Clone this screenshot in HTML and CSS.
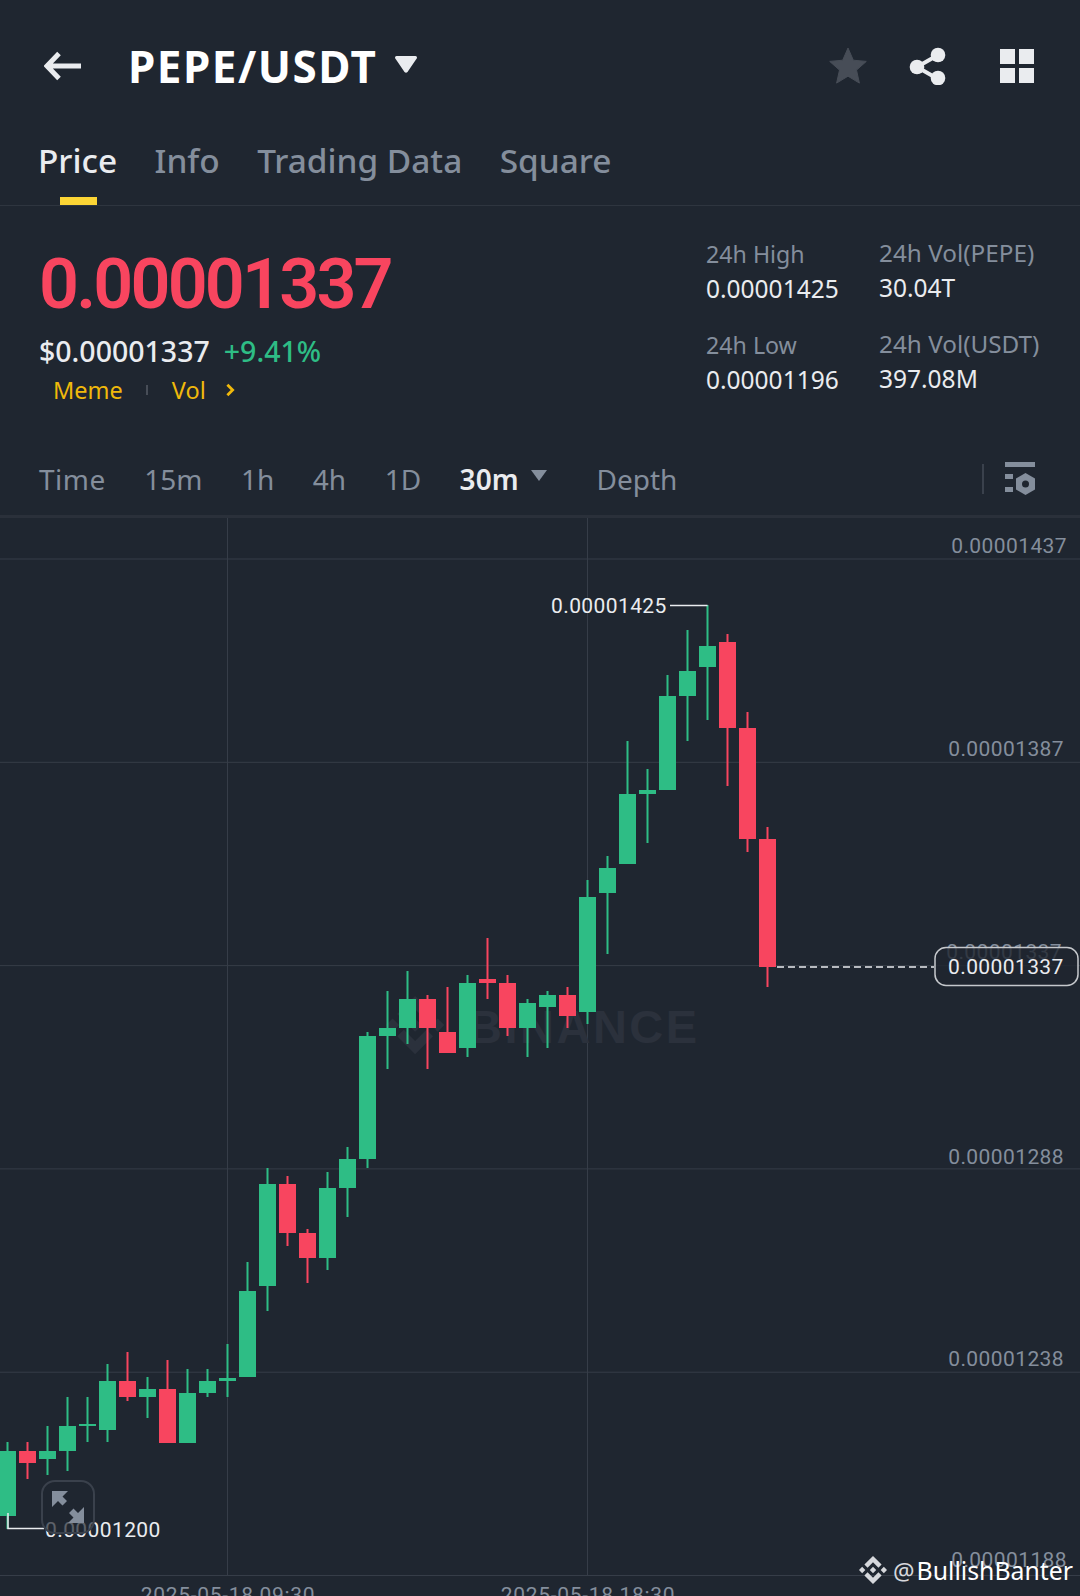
FILE: index.html
```html
<!DOCTYPE html>
<html lang="en">
<head>
  <meta charset="UTF-8">
  <meta name="viewport" content="width=device-width, initial-scale=1">
  <title>PEPE/USDT</title>
  <link rel="stylesheet" href="styles.css">
</head>
<body>

  <header class="topbar">
    <svg class="back" viewBox="0 0 38 30" width="38" height="30">
      <path d="M15 2.500 3 15l12 12.500M3 15h34" fill="none" stroke="#eaecef" stroke-width="5"/>
    </svg>
    <h1 class="pair">PEPE/USDT</h1>
    <svg class="pair-caret" viewBox="0 0 24 17" width="24" height="17">
      <path d="M1 1.500Q1 0 2.500 0h19Q23 0 23 1.500Q23 2.500 22 3.500L13.500 16Q12 17.500 10.500 16L2 3.500Q1 2.500 1 1.500z" fill="#eaecef"/>
    </svg>
    <div class="actions">
      <svg viewBox="0 0 38 38" width="38" height="38">
        <path d="M19 1l5.300 12.200 13 1.200-9.800 8.700 2.900 13L19 29.200 7.600 36.100l2.900-13L.7 14.400l13-1.200z" fill="#474d57" stroke="#474d57" stroke-linejoin="round"/>
      </svg>
      <svg viewBox="0 0 38 38" width="38" height="38">
        <path d="M29 8 8 20l21 12" fill="none" stroke="#eaecef" stroke-width="4"/>
        <circle cx="29" cy="8" r="7.300" fill="#eaecef"/>
        <circle cx="8" cy="20" r="7.300" fill="#eaecef"/>
        <circle cx="29" cy="31" r="7.300" fill="#eaecef"/>
      </svg>
      <div class="grid-icon"><i></i><i></i><i></i><i></i></div>
    </div>
  </header>

  <nav class="tabs">
    <a class="tab active">Price</a>
    <a class="tab">Info</a>
    <a class="tab">Trading Data</a>
    <a class="tab">Square</a>
  </nav>

  <section class="summary">
    <div class="last">
      <div class="last-price">0.00001337</div>
      <div class="last-sub"><span class="usd">$0.00001337</span><span class="change">+9.41%</span></div>
      <div class="tags">
        <span>Meme</span>
        <i class="tag-sep"></i>
        <span>Vol</span>
        <svg viewBox="0 0 10 16" width="10" height="14"><path d="M2 2l6 6-6 6" fill="none" stroke="#f0b90b" stroke-width="3.200"/></svg>
      </div>
    </div>
    <div class="stats stats-price">
      <div class="stat"><span class="stat-label">24h High</span><span class="stat-value">0.00001425</span></div>
      <div class="stat"><span class="stat-label">24h Low</span><span class="stat-value">0.00001196</span></div>
    </div>
    <div class="stats stats-vol">
      <div class="stat"><span class="stat-label">24h Vol(PEPE)</span><span class="stat-value">30.04T</span></div>
      <div class="stat"><span class="stat-label">24h Vol(USDT)</span><span class="stat-value">397.08M</span></div>
    </div>
  </section>

  <div class="intervals">
    <a class="interval time">Time</a>
    <a class="interval">15m</a>
    <a class="interval">1h</a>
    <a class="interval">4h</a>
    <a class="interval">1D</a>
    <a class="interval current">30m</a>
    <svg class="interval-caret" viewBox="0 0 16 11" width="16" height="11"><path d="M0 0h16L8 11z" fill="#848e9c"/></svg>
    <a class="interval depth">Depth</a>
    <i class="interval-sep"></i>
    <svg class="chart-settings" viewBox="0 0 31 34" width="31" height="34">
      <path d="M0 0h30v5H0zM0 12h8v5H0zM0 25h8v5H0z" fill="#848e9c"/>
      <path d="M20.500 11l9.500 5.500v11l-9.500 5.500-9.500-5.500v-11z" fill="#848e9c"/>
      <circle cx="20.500" cy="22" r="3.500" fill="#1f2630"/>
    </svg>
  </div>

  <div class="chart">
    <svg id="chart-svg" viewBox="0 518 1080 1078" width="1080" height="1078">
      <g id="grid" class="grid"></g>
      <g class="watermark">
        <path transform="translate(386 996) scale(.46)" d="M38.730 53.200l24.590-24.580 24.600 24.600 14.300-14.310L63.320 0 24.430 38.890zM0 63.310l14.300-14.310 14.310 14.310-14.310 14.300zM38.730 73.410l24.590 24.590 24.600-24.600 14.310 14.290-38.900 38.910-38.910-38.880zM98.010 63.310l14.300-14.310 14.310 14.300-14.310 14.320zM77.830 63.300L63.320 48.780 52.590 59.510l-1.240 1.230-2.540 2.540 14.510 14.500 14.510-14.470z"/>
        <text x="468" y="1043">BINANCE</text>
      </g>
      <g id="axis" class="axis"></g>
      <g id="candles"></g>

      <text class="mark" x="551" y="613">0.00001425</text>
      <path class="mark-line" d="M670 605.500h37.500"/>
      <path class="mark-line" d="M8 1513v15.500h36"/>
      <text class="mark" x="45" y="1537">0.00001200</text>

      <path class="last-line" d="M777 967h157"/>
      <rect class="last-box" x="935" y="947.500" width="143" height="38" rx="11"/>
      <text class="mark" x="948" y="974">0.00001337</text>

      <text class="axis-time" x="228" y="1602" text-anchor="middle">2025-05-18 09:30</text>
      <text class="axis-time" x="588" y="1602" text-anchor="middle">2025-05-18 18:30</text>
    </svg>

    <button class="expand">
      <svg viewBox="0 0 32 32" width="32" height="32">
        <path d="M0 0h16l-5.500 5.500 4.500 4.500-4.500 4.500-4.500-4.500L0 16zM32 32H16l5.500-5.500-4.500-4.500 4.500-4.500 4.500 4.500L32 16z" fill="#848e9c"/>
      </svg>
    </button>

    <div class="credit">
      <svg viewBox="0 0 126.610 126.610" width="28" height="28">
        <path d="M38.730 53.200l24.590-24.580 24.600 24.600 14.300-14.310L63.320 0 24.430 38.890zM0 63.310l14.300-14.310 14.310 14.310-14.310 14.300zM38.730 73.410l24.590 24.590 24.600-24.600 14.310 14.290-38.900 38.910-38.910-38.880zM98.010 63.310l14.300-14.310 14.310 14.300-14.310 14.320zM77.830 63.300L63.320 48.780 52.590 59.510l-1.240 1.230-2.540 2.540 14.510 14.500 14.510-14.470z" fill="#d6d8dc"/>
      </svg>
      <span class="credit-at">@</span>
      <span class="credit-name">BullishBanter</span>
    </div>
  </div>

  <script>
    // one row per slot from the left: [wickTop, bodyTop, bodyBottom, wickBottom, up?]
    const candles = [
      [1442, 1451, 1516, 1529, 1], [1442, 1451, 1463, 1479, 0], [1426, 1451, 1459, 1475, 1],
      [1397, 1426, 1451, 1471, 1], [1397, 1424, 1426, 1442, 1], [1364, 1381, 1430, 1442, 1],
      [1352, 1381, 1397, 1401, 0], [1377, 1389, 1397, 1418, 1], [1360, 1389, 1443, 1443, 0],
      [1369, 1393, 1443, 1443, 1], [1369, 1381, 1393, 1397, 1], [1344, 1378, 1381, 1397, 1],
      [1262, 1291, 1377, 1377, 1], [1168, 1184, 1286, 1311, 1], [1176, 1184, 1233, 1246, 0],
      [1229, 1233, 1258, 1283, 0], [1172, 1188, 1258, 1270, 1], [1147, 1159, 1188, 1217, 1],
      [1032, 1036, 1159, 1168, 1], [991, 1028, 1036, 1069, 1], [971, 999, 1028, 1044, 1],
      [995, 999, 1028, 1069, 0], [987, 1032, 1053, 1053, 0], [975, 983, 1048, 1057, 1],
      [938, 979, 983, 999, 0], [975, 983, 1028, 1036, 0], [999, 1003, 1028, 1057, 1],
      [991, 995, 1007, 1048, 1], [987, 995, 1016, 1028, 0], [880, 897, 1012, 1024, 1],
      [856, 868, 893, 954, 1], [741, 794, 864, 864, 1], [769, 790, 794, 843, 1],
      [675, 696, 790, 790, 1], [630, 671, 696, 741, 1], [605, 646, 667, 720, 1],
      [634, 642, 728, 786, 0], [712, 728, 839, 852, 0], [827, 839, 967, 987, 0]
    ];
    const axisLabels = [
      ["0.00001437", 1067, 553], ["0.00001387", 1064, 756], ["0.00001337", 1062, 959],
      ["0.00001288", 1064, 1164], ["0.00001238", 1064, 1366], ["0.00001188", 1067, 1567]
    ];
    const NS = "http://www.w3.org/2000/svg";

    function add(parent, tag, attrs, text) {
      const el = document.createElementNS(NS, tag);
      for (const key in attrs) el.setAttribute(key, attrs[key]);
      if (text) el.textContent = text;
      document.getElementById(parent).appendChild(el);
    }

    axisLabels.forEach((label, i) => {
      add("grid", "rect", { x: 0, y: 558.5 + i * 203.3, width: 1080, height: 1 });
      add("axis", "text", { x: label[1], y: label[2], "text-anchor": "end" }, label[0]);
    });
    add("grid", "rect", { x: 227, y: 518, width: 1, height: 1057 });
    add("grid", "rect", { x: 587, y: 518, width: 1, height: 1057 });

    candles.forEach((c, k) => {
      const x = 7.5 + k * 20;
      const color = c[4] ? "#2ebd85" : "#f8455f";
      add("candles", "rect", { x: x - 1, y: c[0], width: 2, height: c[3] - c[0], fill: color });
      add("candles", "rect", { x: x - 8.5, y: c[1], width: 17, height: c[2] - c[1], fill: color });
    });
  </script>

</body>
</html>
```

FILE: styles.css
```css
html, body {
  height: 1596px;
  overflow: hidden;
}

body {
  margin: 0;
  background: #1f2630;
  color: #eaecef;
  font-family: "Noto Sans", "Open Sans", sans-serif;
}

/* top bar */
.topbar {
  display: flex;
  align-items: center;
  height: 132px;
  padding: 0 46px 0 44px;
}

.pair {
  margin: 0 0 0 46px;
  font-size: 44px;
  font-weight: 700;
  letter-spacing: 1.5px;
  color: #fff;
}

.pair-caret {
  margin: -3px 0 0 17px;
}

.actions {
  display: flex;
  align-items: center;
  gap: 42px;
  margin-left: auto;
}

.grid-icon {
  display: grid;
  grid-template-columns: 15px 15px;
  grid-auto-rows: 15px;
  gap: 4px;
  margin-left: 11px;
}

.grid-icon i {
  background: #eaecef;
}

/* tabs */
.tabs {
  display: flex;
  gap: 37.500px;
  height: 73px;
  padding-left: 38px;
  border-bottom: 1px solid #2e353f;
}

.tab {
  position: relative;
  font-size: 33.400px;
  font-weight: 500;
  line-height: 56px;
  color: #848e9c;
}

.tab.active {
  color: #eaecef;
}

.tab.active::after {
  content: "";
  position: absolute;
  left: 50%;
  bottom: 0;
  width: 37px;
  height: 8px;
  margin-left: -18px;
  background: #fcd535;
}

/* price summary */
.summary {
  display: flex;
  height: 239px;
  padding-left: 39px;
}

.last {
  flex: 0 0 667px;
}

.last-price {
  margin-top: 38px;
  font-family: Roboto, sans-serif;
  font-size: 70px;
  font-weight: 600;
  letter-spacing: -2.800px;
  line-height: 80px;
  color: #f8455f;
}

.last-sub {
  display: flex;
  gap: 14px;
  margin-top: 9px;
  font-size: 28.500px;
  font-weight: 500;
  line-height: 36px;
}

.change {
  color: #2ebd85;
}

.tags {
  display: flex;
  align-items: center;
  gap: 23.500px;
  padding-left: 14px;
  margin-top: 4px;
  font-size: 23.500px;
  line-height: 34px;
  color: #f0b90b;
}

.tags svg {
  margin-left: -4px;
}

.tag-sep {
  width: 2px;
  height: 10px;
  background: #474d57;
}

.stats {
  display: flex;
  flex-direction: column;
  gap: 22px;
  padding-top: 31px;
}

.stats-price {
  flex: 0 0 173px;
}

.stats-vol {
  padding-top: 30px;
}

.stat {
  display: flex;
  flex-direction: column;
}

.stat-label {
  font-size: 23.200px;
  line-height: 34px;
  color: #848e9c;
}

.stats-vol .stat-label {
  font-size: 24.300px;
}

.stat-value {
  font-size: 24.500px;
  line-height: 35px;
}

/* interval row */
.intervals {
  display: flex;
  align-items: center;
  box-sizing: border-box;
  height: 73px;
  padding: 0 44px 2px 39px;
  border-bottom: 3px solid #2a303a;
}

.interval {
  margin-right: 38.500px;
  font-size: 28px;
  color: #848e9c;
}

.interval.time {
  letter-spacing: 0.5px;
}

.interval.current {
  margin-right: 12px;
  font-weight: 600;
  color: #eaecef;
}

.interval-caret {
  margin: -8px 50px 0 0;
}

.interval.depth {
  margin-right: auto;
}

.interval-sep {
  width: 2px;
  height: 30px;
  margin-right: 21px;
  background: #3a414c;
}

/* chart */
.chart {
  position: relative;
}

.chart svg {
  display: block;
}

.grid rect {
  fill: #363d48;
}

.watermark {
  fill: #2b313c;
}

.watermark text {
  font-family: "Liberation Sans", sans-serif;
  font-size: 47px;
  font-weight: 700;
  letter-spacing: 2.500px;
}

.axis text,
.axis-time {
  font-family: Roboto, sans-serif;
  font-size: 21px;
  letter-spacing: 0.4px;
  fill: #848e9c;
}

.axis-time {
  letter-spacing: 0.7px;
}

.mark {
  font-family: Roboto, sans-serif;
  font-size: 21px;
  letter-spacing: 0.4px;
  fill: #eaecef;
}

.mark-line {
  fill: none;
  stroke: #eaecef;
  stroke-width: 1.500;
}

.last-line {
  fill: none;
  stroke: #eaecef;
  stroke-width: 1.500;
  stroke-dasharray: 7 4;
}

.last-box {
  fill: rgba(31, 38, 48, 0.8);
  stroke: #c5c8cc;
  stroke-width: 1.500;
}

.expand {
  position: absolute;
  left: 41px;
  top: 962px;
  width: 54px;
  height: 54px;
  padding: 0;
  display: flex;
  align-items: center;
  justify-content: center;
  background: rgba(31, 38, 48, 0.7);
  border: 2px solid #3a414c;
  border-radius: 14px;
}

.credit {
  position: absolute;
  left: 859px;
  top: 1035px;
  display: flex;
  align-items: center;
  white-space: nowrap;
}

.credit-at {
  margin-left: 6px;
  font-size: 24px;
  color: #d6d8dc;
}

.credit-name {
  margin-left: 2px;
  font-size: 24.800px;
  color: #fff;
}
```
